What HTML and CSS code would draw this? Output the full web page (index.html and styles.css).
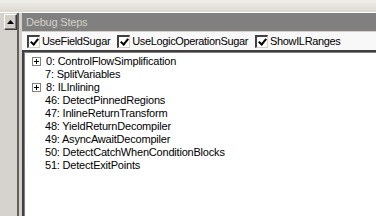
FILE: index.html
```html
<!DOCTYPE html>
<html lang="en">
<head>
  <meta charset="UTF-8">
  <title>Debug Steps</title>
  <link rel="stylesheet" href="styles.css">
</head>
<body>
  <div class="top-band"></div>

  <div class="main">
    <!-- scrollbar of the neighbouring pane -->
    <div class="scroll-col">
      <div class="scroll-btn">
        <svg width="7" height="4" viewBox="0 0 7 4"><path d="M3.5 0 L7 4 L0 4 Z" fill="#000"/></svg>
      </div>
    </div>
    <div class="splitter"></div>

    <div class="panel">
      <div class="panel-title">Debug Steps</div>

      <div class="options">
        <label class="opt"><span class="check"></span>UseFieldSugar</label>
        <label class="opt"><span class="check"></span>UseLogicOperationSugar</label>
        <label class="opt"><span class="check"></span>ShowILRanges</label>
      </div>

      <ul class="tree">
        <li><span class="expander"></span>0: ControlFlowSimplification</li>
        <li class="leaf">7: SplitVariables</li>
        <li><span class="expander"></span>8: ILInlining</li>
        <li class="leaf">46: DetectPinnedRegions</li>
        <li class="leaf">47: InlineReturnTransform</li>
        <li class="leaf">48: YieldReturnDecompiler</li>
        <li class="leaf">49: AsyncAwaitDecompiler</li>
        <li class="leaf">50: DetectCatchWhenConditionBlocks</li>
        <li class="leaf">51: DetectExitPoints</li>
      </ul>
    </div>
  </div>
</body>
</html>
```

FILE: styles.css
```css
body {
  margin: 0;
  padding: 0;
  width: 376px;
  height: 216px;
  overflow: hidden;
  font-family: "Liberation Sans", Arial, sans-serif;
  font-size: 11px;
  letter-spacing: -0.2px;
  color: #000;
  background: #d4d0c8;
  display: flex;
  flex-direction: column;
}

.top-band {
  height: 12px;
  background: linear-gradient(to bottom, #efeee9, #dcd9d1);
  border-bottom: 1px solid #fff;
}

.main {
  flex: 1;
  display: flex;
  min-height: 0;
}

.scroll-col {
  width: 13px;
  padding-left: 4px;
  background: #d6d3ce;
}

.scroll-btn {
  width: 11px;
  height: 14px;
  margin-top: 1px;
  background: #d4d0c8;
  border-top: 1px solid #fff;
  border-left: 1px solid #fff;
  border-right: 1px solid #404040;
  border-bottom: 1px solid #404040;
  box-shadow: inset -1px -1px 0 #808080;
  display: flex;
  align-items: center;
  justify-content: center;
}

.splitter {
  width: 3px;
  border-left: 2px solid #606060;
  background: #d4d0c8;
}

.panel {
  flex: 1;
  display: flex;
  flex-direction: column;
  min-width: 0;
}

.panel-title {
  height: 18px;
  line-height: 18px;
  padding-left: 4px;
  background: #808080;
  color: #d4d0c8;
  border-bottom: 1px solid #d4d0c8;
}

.options {
  height: 18px;
  display: flex;
  align-items: center;
  background: #f8f8f8;
  padding-left: 5px;
  white-space: nowrap;
  letter-spacing: -0.35px;
}

.opt {
  display: flex;
  align-items: center;
  margin-right: 7px;
}

.check {
  width: 10px;
  height: 10px;
  margin-right: 2px;
  background: #fff;
  border-top: 2px solid #404040;
  border-left: 2px solid #404040;
  border-right: 1px solid #d4d0c8;
  border-bottom: 1px solid #d4d0c8;
  position: relative;
}

.check::after {
  content: "";
  position: absolute;
  left: 3px;
  top: 0px;
  width: 3px;
  height: 6px;
  border-right: 2px solid #000;
  border-bottom: 2px solid #000;
  transform: rotate(40deg);
}

.tree {
  flex: 1;
  margin: 0;
  padding: 3px 0 0 8px;
  list-style: none;
  background: #fff;
  border-top: 2px solid #404040;
  border-left: 2px solid #404040;
  box-shadow: inset 1px 1px 0 #808080;
}

.tree li {
  height: 13px;
  line-height: 13px;
  display: flex;
  align-items: center;
  white-space: nowrap;
}

.tree li.leaf {
  padding-left: 13px;
}

.expander {
  width: 7px;
  height: 7px;
  margin-right: 5px;
  border: 1px solid #808080;
  background:
    linear-gradient(#000, #000) center / 5px 1px no-repeat,
    linear-gradient(#000, #000) center / 1px 5px no-repeat,
    #fff;
}
```
